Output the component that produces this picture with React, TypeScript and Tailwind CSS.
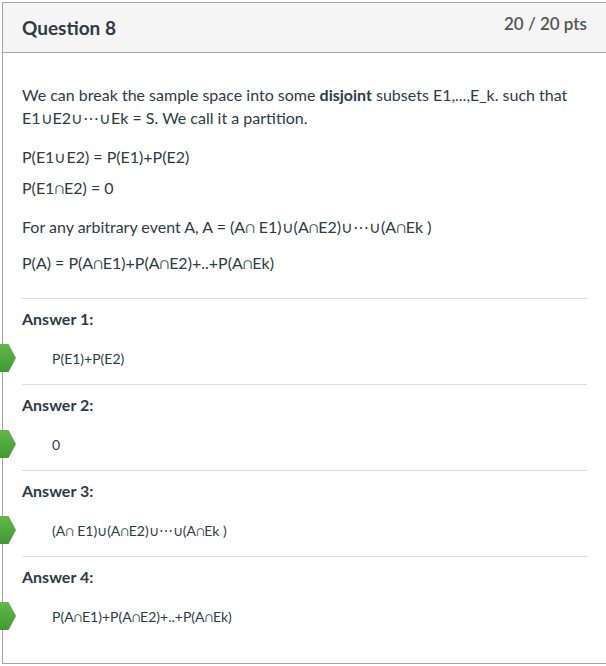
import React from 'react';

const Arrow: React.FC = () => (
  <svg className="absolute left-[-22px] top-0" width="16" height="28" viewBox="0 0 16 28">
    <defs>
      <linearGradient id="g" x1="0" y1="0" x2="0" y2="1">
        <stop offset="0" stopColor="#62b84a" />
        <stop offset="1" stopColor="#3f9a31" />
      </linearGradient>
    </defs>
    <polygon points="0,0 8.5,0 16,14 8.5,28 0,28" fill="url(#g)" />
  </svg>
);

const answers = [
  { label: 'Answer 1:', text: 'P(E1)+P(E2)' },
  { label: 'Answer 2:', text: '0' },
  { label: 'Answer 3:', text: '(A∩ E1)∪(A∩E2)∪⋯∪(A∩Ek )' },
  { label: 'Answer 4:', text: 'P(A∩E1)+P(A∩E2)+..+P(A∩Ek)' },
];

export default function App() {
  return (
    <div className="min-h-[666px] bg-white pt-[2px] pl-[2px] font-['Lato','Liberation_Sans',sans-serif] text-[#2d3b45]">
      <div className="w-[606px] border border-[#a5a5a5] bg-white">
        <div className="flex h-[50px] items-start justify-between border-b border-[#a5a5a5] bg-[#f5f5f5] pl-[19px] pr-[20px]">
          <h2 className="mt-[13px] text-[19px] font-bold leading-[24px] text-[#2d3b45]">Question 8</h2>
          <div className="mt-[10px] text-[17px] font-semibold leading-[22px] text-[#555]">20 / 20 pts</div>
        </div>
        <div className="pl-[19px] pr-[20px] pt-[30px] pb-[33px]">
          <div className="text-[16px] leading-[23px]">
            <p>
              We can break the sample space into some <strong className="font-bold">disjoint</strong> subsets E1,...,E_k. such that E1∪E2∪⋯∪Ek = S. We call it a partition.
            </p>
            <p className="mt-[16px]">P(E1∪E2) = P(E1)+P(E2)</p>
            <p className="mt-[8px]">P(E1∩E2) = 0</p>
            <p className="mt-[16px]">For any arbitrary event A, A = (A∩ E1)∪(A∩E2)∪⋯∪(A∩Ek )</p>
            <p className="mt-[13px]">P(A) = P(A∩E1)+P(A∩E2)+..+P(A∩Ek)</p>
          </div>
          <div className="mt-[24px]">
            {answers.map((a, i) => (
              <div key={i} className={`border-t border-[#dcdcdc] pt-[8px] ${i < answers.length - 1 ? 'pb-[12px]' : ''}`}>
                <div className="text-[16px] font-bold leading-[23px]">{a.label}</div>
                <div className="relative mt-[14px] flex h-[28px] items-center pl-[30px] text-[14px]">
                  <Arrow />
                  <span>{a.text}</span>
                </div>
              </div>
            ))}
          </div>
        </div>
      </div>
    </div>
  );
}
